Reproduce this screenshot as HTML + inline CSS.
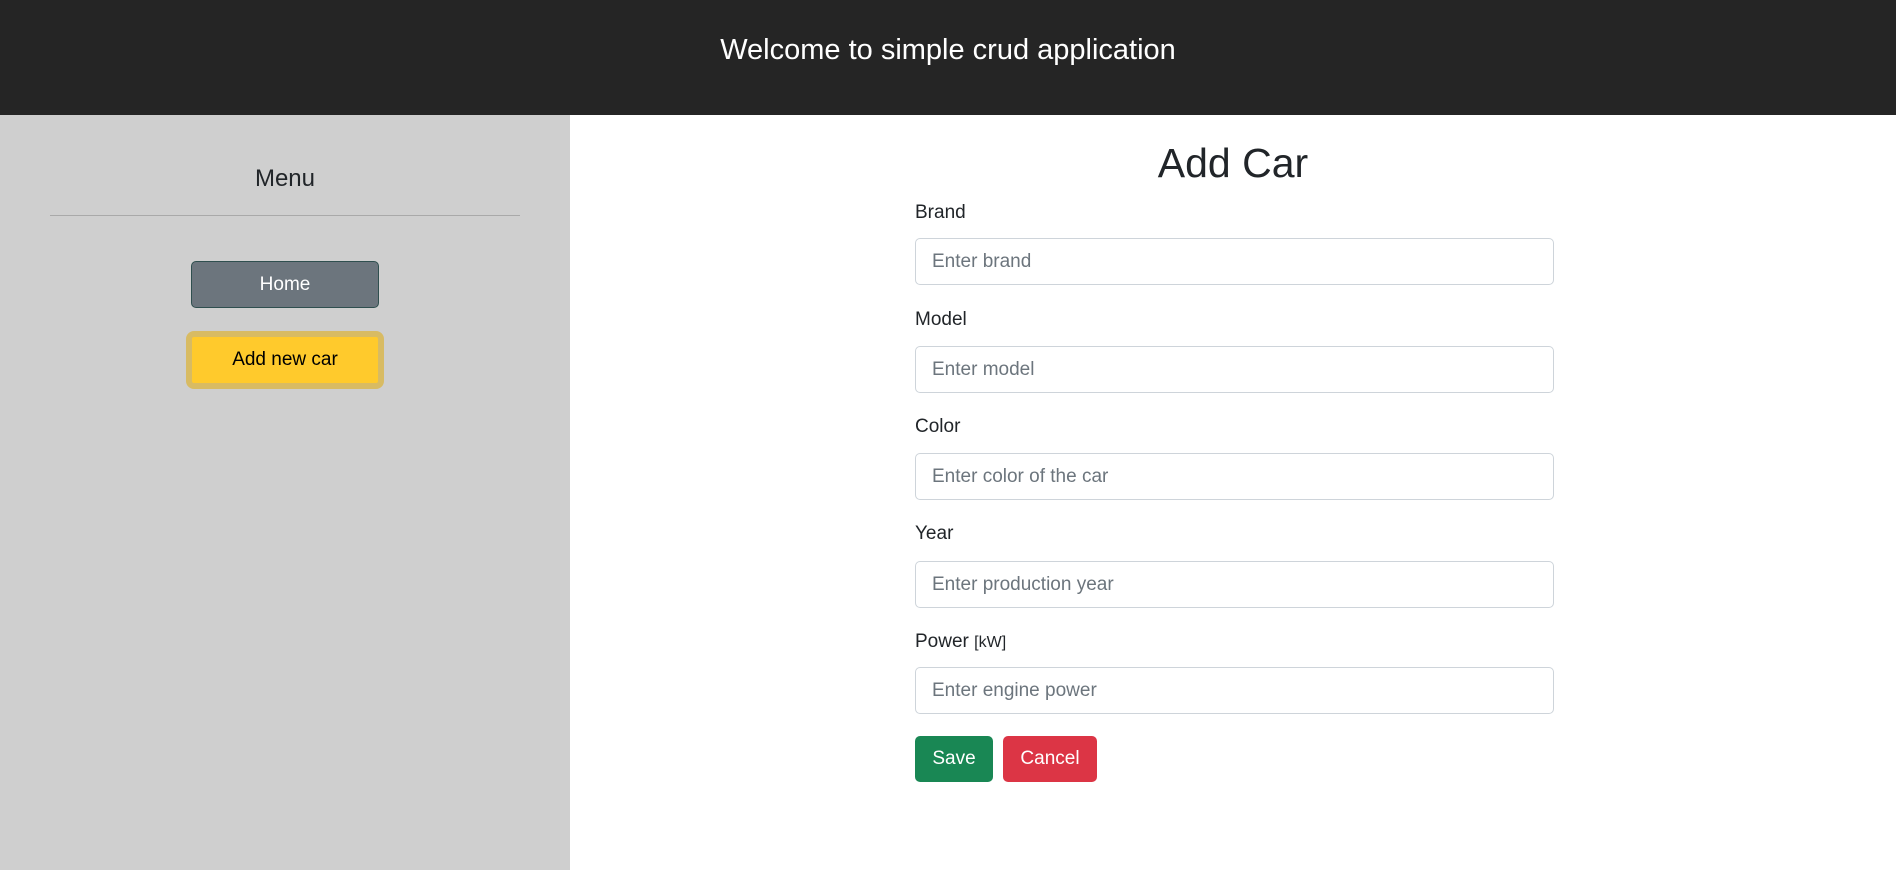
<!DOCTYPE html>
<html><head><meta charset="utf-8"><style>
*{box-sizing:border-box;margin:0;padding:0}
body{width:1896px;height:870px;overflow:hidden;font-family:"Liberation Sans",Arial,sans-serif;background:#fff;position:relative;color:#212529}
.hdr{position:absolute;left:0;top:0;width:1896px;height:115px;background:#252525;color:#fff;font-size:29px;text-align:center;line-height:100px}
.side{position:absolute;left:0;top:115px;width:570px;height:755px;background:#cfcfcf}
.menu{position:absolute;left:0;width:570px;top:50px;text-align:center;font-size:24px;color:#212529}
.hr{position:absolute;left:50px;width:470px;top:100px;height:1px;background:#a9a9a9}
.btn{position:absolute;text-align:center;font-size:19px;border-radius:5px}
.home{left:191px;top:146px;width:188px;height:47px;background:#6c757d;border:1px solid #2f4f4f;color:#fff;line-height:45px}
.add{left:186px;top:216px;width:198px;height:58px;border:6px solid #d8bb63;border-radius:8px;background:#ffca2c;color:#000;line-height:46px}
h1{position:absolute;left:570px;width:1326px;top:138px;text-align:center;font-size:41px;font-weight:normal;line-height:50px}
.lbl{position:absolute;left:915px;font-size:19px;line-height:24px}
.inp{position:absolute;left:915px;width:639px;height:47px;border:1px solid #ced4da;border-radius:5px;font-size:19px;color:#6c757d;padding-left:16px;line-height:45px}
.b2{position:absolute;top:736px;height:46px;color:#fff;font-size:19px;line-height:46px;text-align:center;border-radius:5px}
</style></head><body>
<div class="hdr">Welcome to simple crud application</div>
<div class="side">
<div class="menu">Menu</div>
<div class="hr"></div>
<div class="btn home">Home</div>
<div class="btn add">Add new car</div>
</div>
<h1>Add Car</h1>
<div class="lbl" style="top:201px">Brand</div>
<div class="inp" style="top:238px">Enter brand</div>
<div class="lbl" style="top:308px">Model</div>
<div class="inp" style="top:346px">Enter model</div>
<div class="lbl" style="top:415px">Color</div>
<div class="inp" style="top:453px">Enter color of the car</div>
<div class="lbl" style="top:522px">Year</div>
<div class="inp" style="top:561px">Enter production year</div>
<div class="lbl" style="top:630px">Power <span style="font-size:16px">[kW]</span></div>
<div class="inp" style="top:667px">Enter engine power</div>
<div class="b2" style="left:915px;width:78px;background:#198754">Save</div>
<div class="b2" style="left:1003px;width:94px;background:#dc3545">Cancel</div>
</body></html>
